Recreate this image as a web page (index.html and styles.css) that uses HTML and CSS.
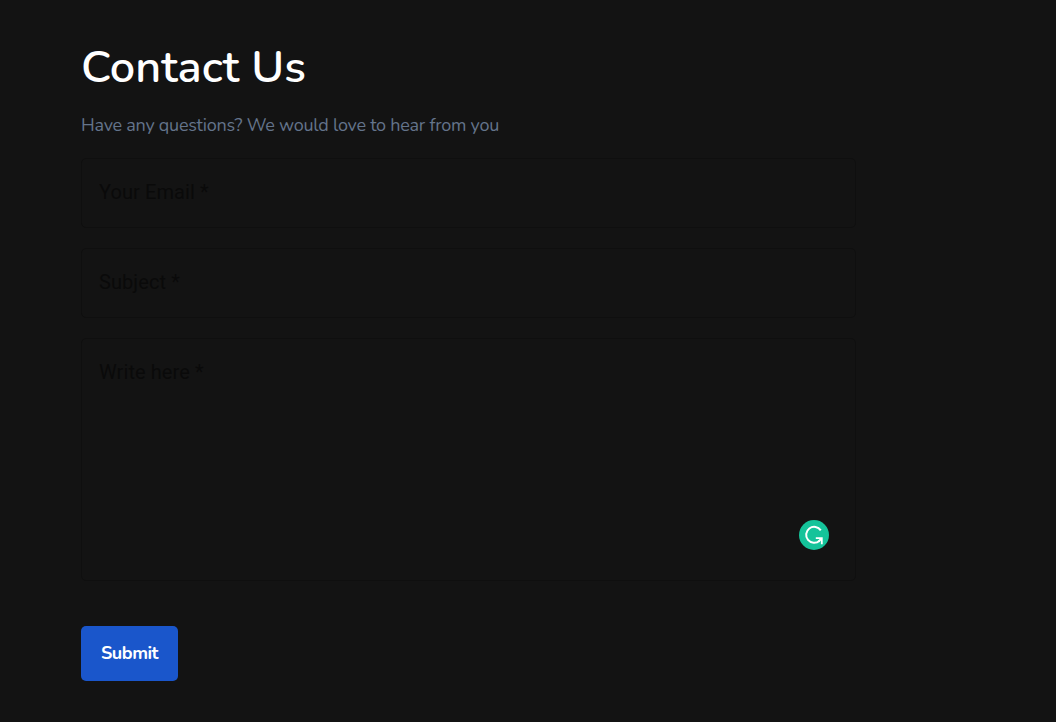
FILE: index.html
```html
<!DOCTYPE html>
<html lang="en">
<head>
    <meta charset="UTF-8">
    <meta name="viewport" content="width=device-width, initial-scale=1.0">
    <title>Contact Us</title>
    <link rel="stylesheet" href="styles.css">
</head>
<body>
    <section class="contact">
        <h1>Contact Us</h1>
        <p class="subtitle">Have any questions? We would love to hear from you</p>

        <form class="contact-form">
            <input type="email" class="field" placeholder="Your Email *" required>
            <input type="text" class="field" placeholder="Subject *" required>
            <div class="message">
                <textarea class="field" placeholder="Write here *" required></textarea>
                <svg class="badge" viewBox="0 0 30 30">
                    <circle cx="15" cy="15" r="15" fill="#15c39a"/>
                    <path d="M21.8 10.4A8 8 0 1 0 20.6 20.7" fill="none" stroke="#fff" stroke-width="2"/>
                    <path d="M16.8 17.3H23.7V24.2H21.9V20.6L20.2 22.3L18.8 20.9L20.6 19.1H16.8Z" fill="#fff"/>
                </svg>
            </div>
            <button type="submit" class="submit-btn">Submit</button>
        </form>
    </section>
</body>
</html>
```
FILE: styles.css
```css
* {
    margin: 0;
    padding: 0;
    box-sizing: border-box;
}

body {
    background: #131313;
    color: #fff;
    font-family: "Nunito", "Lato", sans-serif;
    min-height: 100vh;
}

.contact {
    width: 856px;
    padding: 40px 0 0 81px;
}

h1 {
    font-size: 45px;
    font-weight: 600;
    line-height: 56px;
}

.subtitle {
    margin-top: 16px;
    color: #64748b;
    font-size: 18px;
    line-height: 27px;
    letter-spacing: -0.25px;
    white-space: nowrap;
}

/* Form */
.contact-form {
    display: flex;
    flex-direction: column;
    gap: 20px;
    margin-top: 19px;
}

.field {
    display: block;
    width: 100%;
    height: 70px;
    padding: 0 17px 2px;
    background: transparent;
    border: 1px solid #0f0f0f;
    border-radius: 5px;
    color: #fff;
    font-family: "Roboto", sans-serif;
    font-size: 20px;
    letter-spacing: 0.08px;
    outline: none;
}

.field::placeholder {
    color: #0a0a0a;
    opacity: 1;
}

.message {
    position: relative;
}

textarea.field {
    height: 243px;
    padding: 22px 17px;
    line-height: 23px;
    resize: none;
}

/* Writing assistant badge over the textarea */
.badge {
    position: absolute;
    right: 27px;
    bottom: 31px;
    width: 30px;
    height: 30px;
}

.submit-btn {
    align-self: flex-start;
    width: 97px;
    height: 55px;
    margin-top: 25px;
    padding-bottom: 2px;
    background: #1a56cb;
    border: none;
    border-radius: 5px;
    color: #fff;
    font-family: inherit;
    font-size: 18px;
    font-weight: 700;
    letter-spacing: -0.45px;
    cursor: pointer;
}
```
